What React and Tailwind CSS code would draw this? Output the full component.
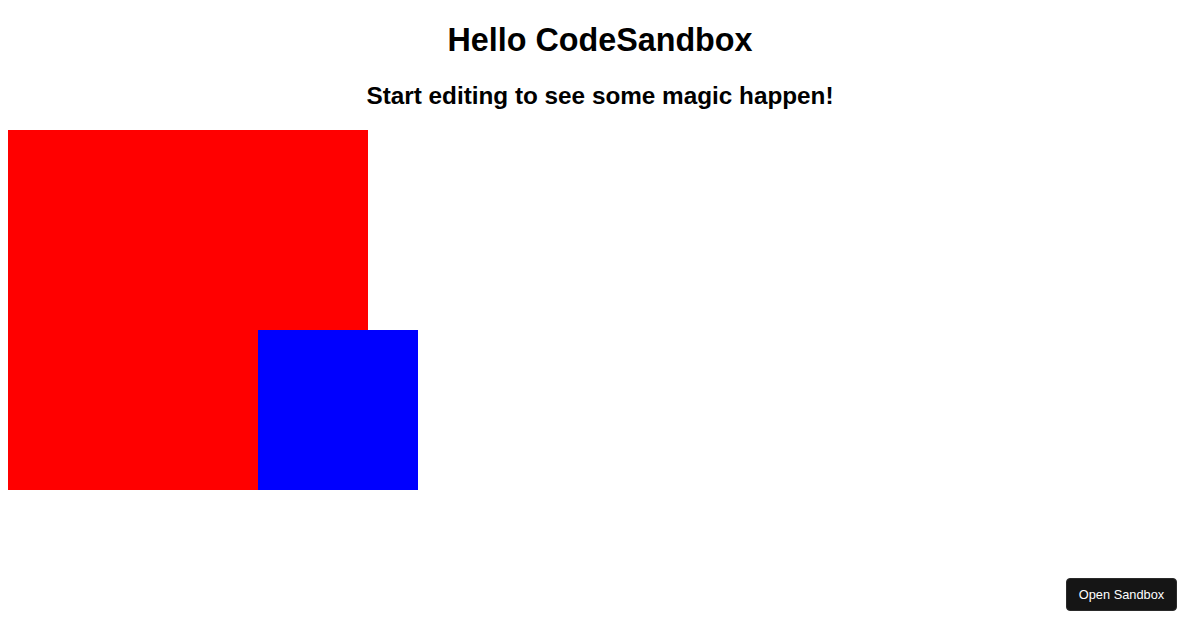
export default function App() {
  return (
    <div className="min-h-[630px] bg-white px-2 font-['Liberation_Sans',Arial,sans-serif] text-black">
      <h1 className="pt-[22px] text-center text-[32.3px] font-bold leading-[37px]">Hello CodeSandbox</h1>
      <h2 className="mt-[23px] text-center text-[24.3px] font-bold leading-[28px]">
        Start editing to see some magic happen!
      </h2>

      {/* red square with the blue one sitting over its lower-right corner */}
      <div className="relative mt-[20px] h-[360px] w-[360px] bg-[#ff0000]">
        <div className="absolute bottom-0 left-[250px] h-[160px] w-[160px] bg-[#0000ff]" />
      </div>

      <button className="fixed bottom-[19px] right-[23px] h-[33px] w-[111px] rounded-[4px] border border-[#2a2a2a] bg-[#151515] text-[12.8px] text-white font-['Liberation_Sans',Arial,sans-serif]">
        Open Sandbox
      </button>
    </div>
  )
}
